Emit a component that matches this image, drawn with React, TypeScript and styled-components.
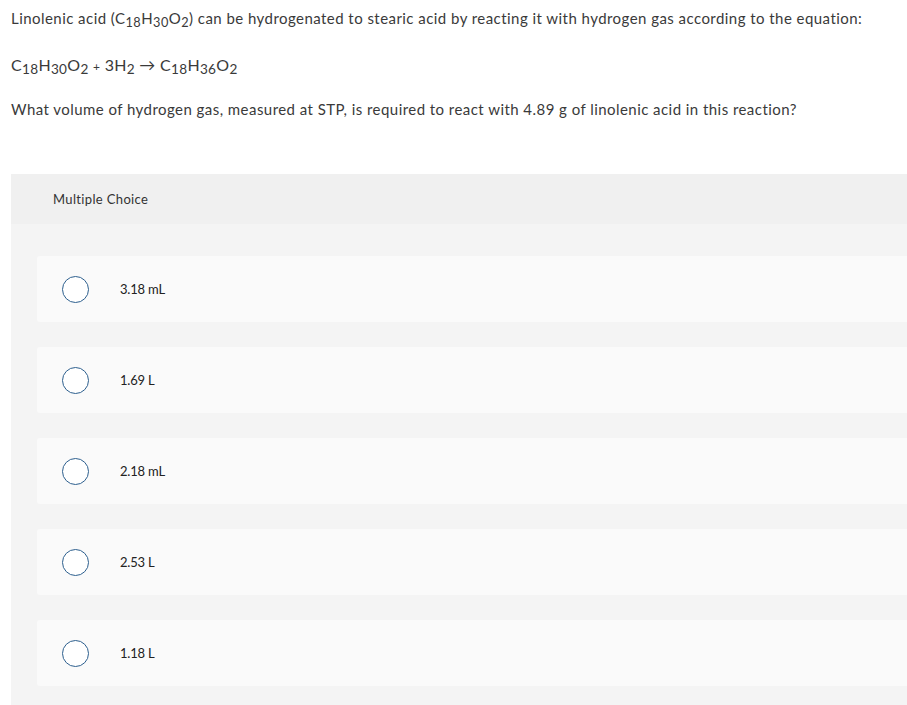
import styled, { createGlobalStyle } from 'styled-components';

const GlobalStyle = createGlobalStyle`
  html, body {
    margin: 0;
    padding: 0;
    background: #ffffff;
  }
  body {
    font-family: Lato, "Open Sans", Arial, sans-serif;
    color: #3a3a3a;
  }
`;

const choices = ['3.18 mL', '1.69 L', '2.18 mL', '2.53 L', '1.18 L'];

export default function App() {
  return (
    <>
      <GlobalStyle />
      <Page>
        <Prompt>
          <p>
            Linolenic acid (C<sub>18</sub>H<sub>30</sub>O<sub>2</sub>) can be hydrogenated to
            stearic acid by reacting it with hydrogen gas according to the equation:
          </p>
          <Equation>
            C<sub>18</sub>H<sub>30</sub>O<sub>2</sub> <Plus>+</Plus> 3H<sub>2</sub> → C
            <sub>18</sub>H<sub>36</sub>O<sub>2</sub>
          </Equation>
          <p>
            What volume of hydrogen gas, measured at STP, is required to react with 4.89 g of
            linolenic acid in this reaction?
          </p>
        </Prompt>
        <Panel>
          <PanelHeader>Multiple Choice</PanelHeader>
          <ChoiceList>
            {choices.map((c) => (
              <ChoiceRow key={c}>
                <Radio />
                <ChoiceLabel>{c}</ChoiceLabel>
              </ChoiceRow>
            ))}
          </ChoiceList>
        </Panel>
      </Page>
    </>
  );
}

const Page = styled.div`
  width: 907px;
  height: 705px;
  overflow: hidden;
  padding-left: 11px;
  box-sizing: border-box;
`;

const Prompt = styled.div`
  font-size: 15px;
  line-height: 20px;
  letter-spacing: 0.45px;
  padding-top: 8px;

  p {
    margin: 0 0 22px;
  }

  sub {
    font-size: 0.85em;
    vertical-align: -3px;
    line-height: 0;
  }
`;

const Equation = styled.p`
  && {
    margin: 0 0 22px;
    padding-top: 5px;
    font-size: 16px;
    letter-spacing: 0.3px;
  }
`;

const Plus = styled.span`
  font-size: 12px;
`;

const Panel = styled.div`
  margin-top: 55px;
  background: #f4f4f4;
`;

const PanelHeader = styled.div`
  height: 50px;
  background: #f0f0f0;
  display: flex;
  align-items: center;
  padding-left: 42px;
  font-size: 13px;
  letter-spacing: 0.35px;
  color: #333333;
`;

const ChoiceList = styled.div`
  display: flex;
  flex-direction: column;
  gap: 25px;
  padding: 32px 0 40px 26px;
`;

const ChoiceRow = styled.div`
  height: 66px;
  background: #fafafa;
  border-radius: 3px 0 0 3px;
  display: flex;
  align-items: center;
  padding-left: 25px;
`;

const Radio = styled.span`
  width: 25px;
  height: 25px;
  border: 1.5px solid #2d5f8e;
  border-radius: 50%;
  background: #ffffff;
  flex-shrink: 0;
`;

const ChoiceLabel = styled.span`
  margin-left: 31px;
  font-size: 13px;
  letter-spacing: -0.2px;
  color: #222222;
`;
